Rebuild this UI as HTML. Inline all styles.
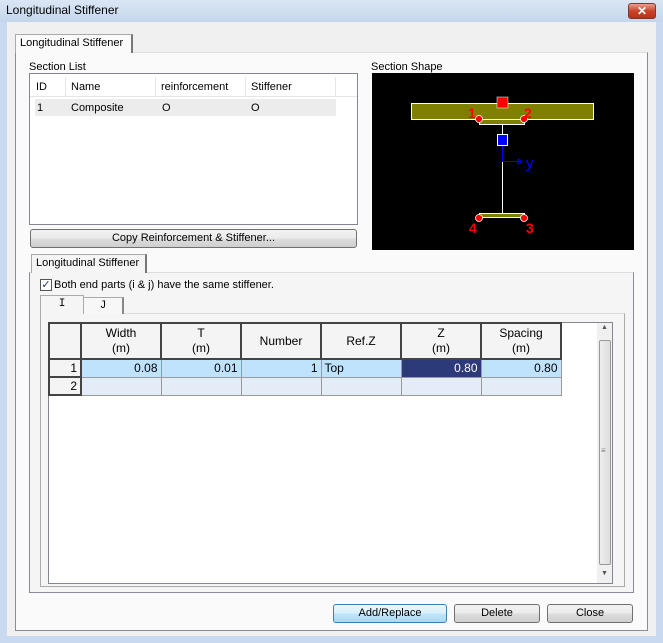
<!DOCTYPE html><html><head><style>
*{margin:0;padding:0;box-sizing:border-box}
body{width:663px;height:643px;background:#f0f0f0;font-family:"Liberation Sans",sans-serif;font-size:11px;color:#000;position:relative;overflow:hidden}
.a{position:absolute;white-space:nowrap}
.btn{position:absolute;border:1px solid #707070;border-radius:3px;background:linear-gradient(#f2f2f2,#ebebeb 50%,#dddddd 51%,#cfcfcf);text-align:center;line-height:16px;font-size:11px}
.tab{position:absolute;background:#f7f7f7;border:1px solid #aaa;border-bottom:none;padding:0 4px;line-height:17px;white-space:nowrap}
table{border-collapse:collapse;position:absolute;table-layout:fixed}
td{border:1px solid #999;font-size:12px;padding:0 3px;overflow:hidden}
</style></head><body>
<div class="a" style="left:0;top:0;width:663px;height:643px;border:1px solid #6d8db4;border-top:none"></div>
<div class="a" style="left:0;top:0;width:663px;height:22px;background:linear-gradient(#dbe6f4,#c4d6ec);font-size:12px;line-height:21px;padding-left:6px">Longitudinal Stiffener</div>
<div class="a" style="left:628px;top:3px;width:28px;height:16px;border:1px solid #7a3a30;border-radius:3px;background:linear-gradient(#e8a090,#c8452c 50%,#b83018);color:#fff;text-align:center;font-weight:bold;line-height:14px;font-size:12px">✕</div>
<div class="a" style="left:0;top:22px;width:7px;height:621px;background:#c9daf0"></div>
<div class="a" style="left:656px;top:22px;width:7px;height:621px;background:#c9daf0"></div>
<div class="a" style="left:0;top:636px;width:663px;height:7px;background:#c9daf0"></div>
<div class="a" style="left:7px;top:22px;width:649px;height:614px;background:#f0f0f0"></div>
<div class="a" style="left:15px;top:52px;width:633px;height:579px;border:1px solid #898c95;border-top-color:#ddd;background:#fafafa"></div>
<div class="tab" style="left:15px;top:34px;width:118px;height:19px;background:#fafafa;border-right:2px solid #777">Longitudinal Stiffener</div>
<div class="a" style="left:29px;top:61px">Section List</div>
<div class="a" style="left:29px;top:73px;width:329px;height:152px;border:1px solid #828790;background:#fff"></div>
<div class="a" style="left:30px;top:76px;width:327px;height:21px;border-bottom:1px solid #e5e5e5"></div>
<div class="a" style="left:36px;top:81px">ID</div>
<div class="a" style="left:71px;top:81px">Name</div>
<div class="a" style="left:161px;top:81px">reinforcement</div>
<div class="a" style="left:251px;top:81px">Stiffener</div>
<div class="a" style="left:65px;top:77px;width:1px;height:19px;background:#e5e5e5"></div>
<div class="a" style="left:155px;top:77px;width:1px;height:19px;background:#e5e5e5"></div>
<div class="a" style="left:245px;top:77px;width:1px;height:19px;background:#e5e5e5"></div>
<div class="a" style="left:335px;top:77px;width:1px;height:19px;background:#e5e5e5"></div>
<div class="a" style="left:35px;top:99px;width:301px;height:17px;background:#ececec"></div>
<div class="a" style="left:37px;top:102px">1</div>
<div class="a" style="left:71px;top:102px">Composite</div>
<div class="a" style="left:162px;top:102px">O</div>
<div class="a" style="left:251px;top:102px">O</div>
<div class="btn" style="left:30px;top:229px;width:327px;height:19px">Copy Reinforcement &amp; Stiffener...</div>
<div class="a" style="left:371px;top:61px">Section Shape</div>
<svg class="a" style="left:372px;top:73px" width="262" height="177" viewBox="372 73 262 177">
<rect x="372" y="73" width="262" height="177" fill="#000"/>
<rect x="411.5" y="103.5" width="182" height="16" fill="#808000" stroke="#fff"/>
<rect x="479.5" y="119.5" width="45" height="5" fill="#808000" stroke="#fff"/>
<line x1="502.5" y1="124" x2="502.5" y2="213" stroke="#fff"/>
<rect x="479.5" y="213.5" width="45" height="4" fill="#808000" stroke="#fff"/>
<rect x="497" y="97" width="11" height="11" fill="#f00" stroke="#fff" stroke-width=".5"/>
<line x1="502.5" y1="145" x2="502.5" y2="161" stroke="#00f"/>
<rect x="497.5" y="134.5" width="10" height="11" fill="#00f" stroke="#fff"/>
<line x1="502" y1="161.5" x2="520" y2="161.5" stroke="#00f"/>
<path d="M518 159 L522 161.5 L518 164Z" fill="none" stroke="#00f"/>
<text x="526" y="168" fill="#00f" font-size="15" font-family="Liberation Sans">y</text>
<g fill="#f00" stroke="#fff" stroke-width=".8"><circle cx="479" cy="119" r="3.5"/><circle cx="524" cy="119" r="3.5"/><circle cx="479" cy="218" r="3.5"/><circle cx="524" cy="218" r="3.5"/></g>
<g fill="#f00" font-size="14" font-family="Liberation Sans" font-weight="bold"><text x="468" y="118">1</text><text x="524" y="118">2</text><text x="469" y="233">4</text><text x="526" y="233">3</text></g>
</svg>
<div class="a" style="left:29px;top:272px;width:605px;height:321px;border:1px solid #898c95;border-top-color:#ddd;background:#f5f5f5"></div>
<div class="tab" style="left:31px;top:254px;width:116px;height:19px;background:#f5f5f5;border-right:2px solid #777">Longitudinal Stiffener</div>
<div class="a" style="left:40px;top:279px;width:12px;height:12px;border:1px solid #555;background:#fff;color:#235;font-size:11px;line-height:10px;text-align:center">✓</div>
<div class="a" style="left:54px;top:279px">Both end parts (i &amp; j) have the same stiffener.</div>
<div class="a" style="left:40px;top:313px;width:585px;height:274px;border:1px solid #aaa;border-top-color:#ddd;background:#f5f5f5"></div>
<div class="tab" style="left:40px;top:295px;width:44px;height:19px;text-align:center;font-family:'Liberation Mono';background:#f5f5f5">I</div>
<div class="tab" style="left:84px;top:297px;width:40px;height:17px;text-align:center;font-family:'Liberation Mono';border-left:none;border-right:2px solid #888">J</div>
<div class="a" style="left:48px;top:322px;width:565px;height:262px;border:1px solid #828790;background:#fff"></div>
<table style="left:48px;top:322px;width:512px">
<colgroup><col style="width:32px"><col style="width:80px"><col style="width:80px"><col style="width:80px"><col style="width:80px"><col style="width:80px"><col style="width:80px"></colgroup>
<tr style="height:36px;text-align:center;background:#f4f4f4;line-height:15px"><td style="border:2px solid #444"></td><td style="border:2px solid #444">Width<br>(m)</td><td style="border:2px solid #444">T<br>(m)</td><td style="border:2px solid #444">Number</td><td style="border:2px solid #444">Ref.Z</td><td style="border:2px solid #444">Z<br>(m)</td><td style="border:2px solid #444">Spacing<br>(m)</td></tr>
<tr style="height:18px;text-align:right;background:#bfe3fc"><td style="background:#f4f4f4;border:2px solid #444;border-top:none">1</td><td>0.08</td><td>0.01</td><td>1</td><td style="text-align:left">Top</td><td style="background:#2c3a7a;color:#fff">0.80</td><td>0.80</td></tr>
<tr style="height:18px;text-align:right;background:#e3ecf7"><td style="background:#f4f4f4;border:2px solid #444">2</td><td></td><td></td><td></td><td></td><td></td><td></td></tr>
</table>
<div class="a" style="left:597px;top:323px;width:15px;height:260px;background:#f0f0f0"></div>
<div class="a" style="left:599px;top:340px;width:12px;height:225px;border:1px solid #999;border-radius:2px;background:linear-gradient(90deg,#eee,#ddd)"></div>
<div class="a" style="left:601px;top:324px;font-size:7px;color:#555">▲</div>
<div class="a" style="left:601px;top:570px;font-size:7px;color:#555">▼</div>
<div class="a" style="left:601px;top:446px;font-size:8px;color:#777">≡</div>
<div class="btn" style="left:333px;top:604px;width:114px;height:19px;border-color:#3c7fb1;background:linear-gradient(#eaf6fd,#d9f0fc 50%,#bee6fd 51%,#a7d9f5)">Add/Replace</div>
<div class="btn" style="left:454px;top:604px;width:86px;height:19px">Delete</div>
<div class="btn" style="left:547px;top:604px;width:86px;height:19px">Close</div>
</body></html>
